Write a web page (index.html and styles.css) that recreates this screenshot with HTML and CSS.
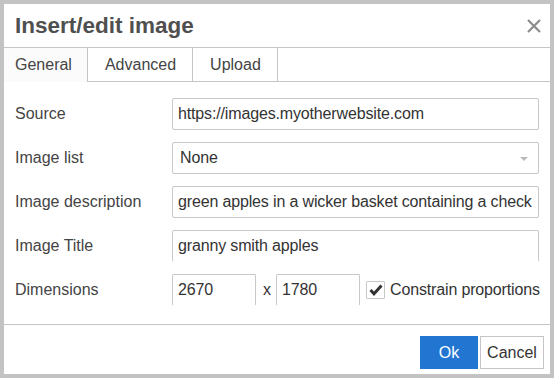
FILE: index.html
```html
<!DOCTYPE html>
<html>
<head>
<meta charset="utf-8">
<link rel="stylesheet" href="styles.css">
</head>
<body>
<div class="dialog">
  <div class="head">
    <div class="title">Insert/edit image</div>
    <svg class="close" width="14" height="14" viewBox="0 0 14 14"><path d="M1 1L13 13M13 1L1 13" stroke="#8c8c8c" stroke-width="2.2" fill="none"/></svg>
  </div>
  <div class="tabs">
    <div class="tab active first">General</div>
    <div class="tab">Advanced</div>
    <div class="tab">Upload</div>
  </div>
  <div class="body">
    <div class="row"><div class="label">Source</div><div class="input">https://images.myotherwebsite.com</div></div>
    <div class="row"><div class="label">Image list</div><div class="input select">None<span class="caret"></span></div></div>
    <div class="row"><div class="label">Image description</div><div class="input">green apples in a wicker basket containing a check</div></div>
    <div class="row"><div class="label">Image Title</div><div class="input open">granny smith apples</div></div>
    <div class="row"><div class="label">Dimensions</div>
      <div class="dims">
        <div class="input small open">2670</div>
        <span class="times">x</span>
        <div class="input small open">1780</div>
        <span class="check"><svg width="14" height="12" viewBox="0 0 14 12"><path d="M1.5 6L5 9.8L12.5 1.5" stroke="#333" stroke-width="3" fill="none"/></svg></span>
        <span class="checklabel">Constrain proportions</span>
      </div>
    </div>
  </div>
  <div class="foot">
    <div class="btn primary">Ok</div>
    <div class="btn">Cancel</div>
  </div>
</div>
</body>
</html>
```

FILE: styles.css
```css
html, body { margin: 0; padding: 0; }
body { font-family: "Liberation Sans", Arial, sans-serif; color: #333; }
.dialog {
  width: 554px; height: 378px; box-sizing: border-box;
  border: 4px solid #c3c3c3; background: #fff;
  display: flex; flex-direction: column;
}
.head {
  height: 43px; border-bottom: 1px solid #c5c5c5;
  display: flex; align-items: center; justify-content: space-between;
  padding: 0 9px 0 11px;
}
.title { font-size: 22.5px; font-weight: bold; color: #4f4f4f; margin-top: 1px; }
.close { margin-top: 1px; }
.tabs {
  height: 33px; border-bottom: 1px solid #c5c5c5; display: flex;
}
.tab {
  font-size: 16px; color: #444; padding: 0 16px 0 17px;
  display: flex; align-items: center; border-right: 1px solid #c5c5c5;
  background: #fff;
}
.tab.first { padding-left: 11px; padding-right: 15px; }
.tab.active { background: #fbfbfb; height: 34px; position: relative; z-index: 1; }
.body {
  height: 242px; box-sizing: border-box; padding: 16px 11px 0 11px;
  display: flex; flex-direction: column; gap: 12px;
}
.row { display: flex; align-items: center; height: 32px; }
.label { width: 157px; flex: none; font-size: 16px; color: #444; }
.input {
  flex: 1; height: 32px; box-sizing: border-box; border: 1px solid #c8c8c8;
  border-radius: 2px; font-size: 16px; color: #333; padding: 0 5px;
  display: flex; align-items: center; white-space: nowrap; overflow: hidden;
  letter-spacing: -0.15px;
}
.input.open { border-bottom-color: transparent; }
.select { justify-content: space-between; padding-left: 7px; padding-right: 10px; }
.caret { width: 0; height: 0; border-left: 4px solid transparent; border-right: 4px solid transparent; border-top: 4px solid #bbb; margin-top: 2px; }
.dims { display: flex; align-items: center; flex: 1; }
.input.small { flex: none; width: 84px; }
.times { font-size: 16px; margin: 0 5px 0 7px; color: #333; }
.check {
  width: 19px; height: 18px; box-sizing: border-box; border: 1px solid #c8c8c8;
  margin-left: 6px; display: flex; align-items: center; justify-content: center; border-radius: 1px;
  flex: none;
}
.checklabel { font-size: 16px; margin-left: 5px; color: #333; white-space: nowrap; letter-spacing: -0.15px; }
.foot {
  flex: 1; border-top: 1px solid #c5c5c5; display: flex; justify-content: flex-end;
  align-items: flex-start; padding: 11px 6px 0 0; gap: 2px;
}
.btn {
  height: 33px; box-sizing: border-box; border: 1px solid #c5c5c5; font-size: 16px;
  color: #333; display: flex; align-items: center; justify-content: center; width: 64px;
  background: #fff;
}
.btn.primary { background: #2276d2; border-color: #2276d2; color: #fff; width: 58px; }
```
